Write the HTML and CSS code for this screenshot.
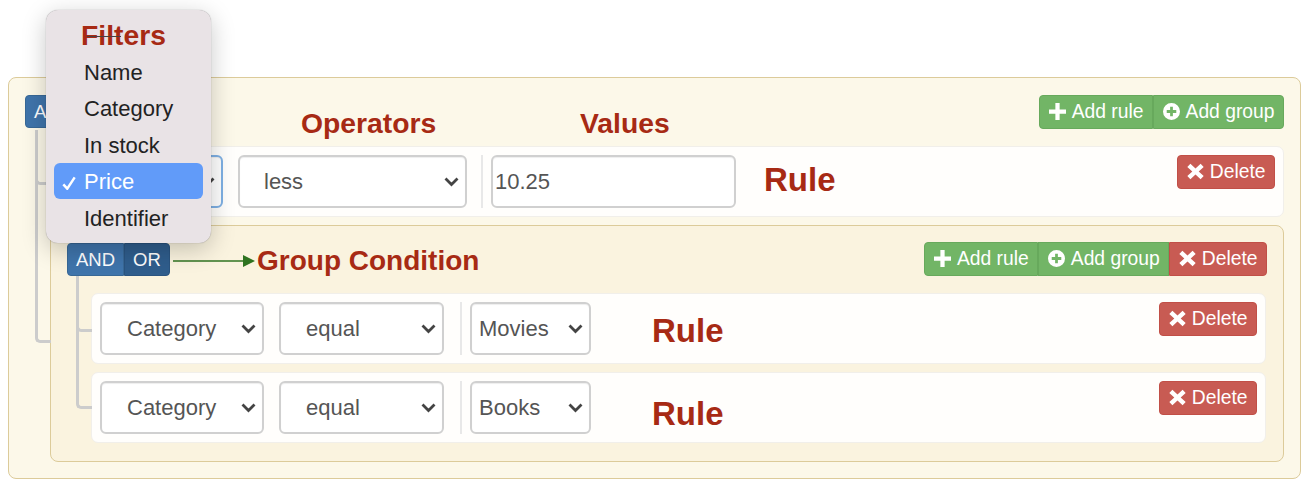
FILE: index.html
```html
<!DOCTYPE html>
<html lang="en">
<head>
  <meta charset="UTF-8">
  <title>Query Builder Filters</title>
  <link rel="stylesheet" href="styles.css">
</head>
<body>
  <div class="page">
    <div class="group group-root">
      <div class="group-header">
        <div class="btn-group btn-group-condition">
          <button class="btn btn-blue">AND</button>
          <button class="btn btn-blue-dark">OR</button>
        </div>
        <div class="btn-group">
          <button class="btn btn-green"><svg class="icon" viewBox="0 0 16 16"><path d="M6 0h4v6h6v4h-6v6H6v-6H0V6h6z"/></svg>Add rule</button>
          <button class="btn btn-green"><svg class="icon" viewBox="0 0 16 16"><path fill-rule="evenodd" d="M8 0a8 8 0 1 1 0 16A8 8 0 0 1 8 0zM6.7 3.5v3.2H3.5v2.6h3.2v3.2h2.6V9.3h3.2V6.7H9.3V3.5z"/></svg>Add group</button>
        </div>
      </div>
      <div class="rules-list">
        <div class="rule">
          <select class="field field-filter field-focus"><option>Price</option></select>
          <select class="field field-operator-wide"><option>less</option></select>
          <div class="separator"></div>
          <input class="field field-input" type="text" value="10.25">
          <button class="btn btn-red btn-delete"><svg class="icon" viewBox="0 0 16 16"><path d="M3.2.8 8 5.2 12.8.8l2.9 2.9L11 8l4.7 4.3-2.9 2.9L8 10.8l-4.8 4.4-2.9-2.9L5 8 .3 3.700z"/></svg>Delete</button>
        </div>

        <div class="group group-nested">
          <div class="group-header">
            <div class="btn-group btn-group-condition">
              <button class="btn btn-blue">AND</button>
              <button class="btn btn-blue-dark">OR</button>
            </div>
            <div class="btn-group">
              <button class="btn btn-green"><svg class="icon" viewBox="0 0 16 16"><path d="M6 0h4v6h6v4h-6v6H6v-6H0V6h6z"/></svg>Add rule</button>
              <button class="btn btn-green"><svg class="icon" viewBox="0 0 16 16"><path fill-rule="evenodd" d="M8 0a8 8 0 1 1 0 16A8 8 0 0 1 8 0zM6.7 3.5v3.2H3.5v2.6h3.2v3.2h2.6V9.3h3.2V6.7H9.3V3.5z"/></svg>Add group</button>
              <button class="btn btn-red"><svg class="icon" viewBox="0 0 16 16"><path d="M3.2.8 8 5.2 12.8.8l2.9 2.9L11 8l4.7 4.3-2.9 2.9L8 10.8l-4.8 4.4-2.9-2.9L5 8 .3 3.700z"/></svg>Delete</button>
            </div>
          </div>
          <div class="rules-list">
            <div class="rule">
              <select class="field field-filter"><option>Category</option></select>
              <select class="field field-operator"><option>equal</option></select>
              <div class="separator"></div>
              <select class="field field-value"><option>Movies</option></select>
              <button class="btn btn-red btn-delete"><svg class="icon" viewBox="0 0 16 16"><path d="M3.2.8 8 5.2 12.8.8l2.9 2.9L11 8l4.7 4.3-2.9 2.9L8 10.8l-4.8 4.4-2.9-2.9L5 8 .3 3.700z"/></svg>Delete</button>
            </div>
            <div class="rule">
              <select class="field field-filter"><option>Category</option></select>
              <select class="field field-operator"><option>equal</option></select>
              <div class="separator"></div>
              <select class="field field-value"><option>Books</option></select>
              <button class="btn btn-red btn-delete"><svg class="icon" viewBox="0 0 16 16"><path d="M3.2.8 8 5.2 12.8.8l2.9 2.9L11 8l4.7 4.3-2.9 2.9L8 10.8l-4.8 4.4-2.9-2.9L5 8 .3 3.700z"/></svg>Delete</button>
            </div>
          </div>
        </div>
      </div>
    </div>

    <!-- annotations drawn on top of the builder -->
    <span class="note note-operators">Operators</span>
    <span class="note note-values">Values</span>
    <span class="note note-group">Group Condition</span>
    <span class="note note-rule note-rule-1">Rule</span>
    <span class="note note-rule note-rule-2">Rule</span>
    <span class="note note-rule note-rule-3">Rule</span>
    <svg class="arrow" viewBox="0 0 82 12"><path d="M0 6h70" stroke="#2f7320" stroke-width="1.5" fill="none"/><path d="M70 0l12 6-12 6z" fill="#2f7320"/></svg>

    <!-- open filter dropdown -->
    <div class="menu">
      <div class="menu-item"></div>
      <div class="menu-item">Name</div>
      <div class="menu-item">Category</div>
      <div class="menu-item">In stock</div>
      <div class="menu-item menu-selected"><svg class="menu-check" viewBox="0 0 16 16"><path d="M1.500 9.500 6 14.500 14.500 1.500" fill="none" stroke="#fff" stroke-width="2.800"/></svg>Price</div>
      <div class="menu-item">Identifier</div>
    </div>
    <span class="note note-filters">Filters</span>
  </div>
</body>
</html>
```

FILE: styles.css
```css
/* General Styles */
body {
  margin: 0;
  background-color: #fff;
  font-family: "Liberation Sans", Arial, sans-serif;
  color: #555;
}

.page {
  position: relative;
  width: 1310px;
  height: 490px;
  padding: 77px 9px 0 8px;
  box-sizing: border-box;
  overflow: hidden;
}

/* Groups */
.group {
  border: 1px solid #dccb9a;
  border-radius: 8px;
  box-sizing: border-box;
}

.group-root {
  height: 402px;
  padding: 17px 16px;
  background-color: #fcf8e9;
}

.group-nested {
  position: relative;
  height: 237px;
  padding: 16px 17px 17px 15px;
  background-color: #faf3df;
}

.group-header {
  position: relative;
  display: flex;
  justify-content: space-between;
  height: 34px;
  margin-bottom: 17px;
}

.group-nested .group-header {
  margin-right: -1px;
}

.rules-list {
  position: relative;
  display: flex;
  flex-direction: column;
  gap: 8px;
  padding-left: 25px;
}

/* Tree connectors */
.rule::before,
.group-nested::before {
  content: "";
  position: absolute;
  left: -16px;
  width: 16px;
  border-left: 3px solid #ccc;
  border-bottom: 3px solid #ccc;
  border-bottom-left-radius: 5px;
  box-sizing: border-box;
}

.rule {
  position: relative;
  display: flex;
  align-items: flex-start;
  height: 71px;
  padding: 8px;
  background-color: #fffefc;
  border: 1px solid #f1efea;
  border-radius: 7px;
  box-sizing: border-box;
}

.rule::before {
  top: -18px;
  height: 56px;
}

.rule + .rule::before {
  top: -50px;
  height: 86px;
}

.group-root > .rules-list > .rule::before {
  top: -17px;
  height: 55px;
}

.group-nested::before {
  top: -96px;
  height: 213px;
}

/* Buttons */
.btn-group {
  display: flex;
  height: 34px;
}

.btn {
  display: flex;
  align-items: center;
  height: 34px;
  padding: 0 8.500px;
  border: 1px solid transparent;
  font-family: inherit;
  font-size: 19.300px;
  color: #fff;
  box-sizing: border-box;
}

.btn-group .btn:first-child {
  border-radius: 4px 0 0 4px;
}

.btn-group .btn:last-child {
  border-radius: 0 4px 4px 0;
}

.btn-group-condition .btn {
  height: 33px;
  padding: 0 8px;
  font-size: 18.500px;
}

.group-nested .btn-group-condition {
  margin: 1px 0 0 1px;
}

.btn-blue {
  background-color: #3f74ab;
  border-color: #386896;
}

.btn-blue-dark {
  background-color: #2f5d8c;
  border-color: #2a5480;
}

.btn-green {
  background-color: #72b566;
  border-color: #67a95c;
}

.btn-red {
  background-color: #c85b53;
  border-color: #c14f47;
}

.btn-delete {
  margin-left: auto;
  border-radius: 4px;
}

.icon {
  width: 17px;
  height: 17px;
  margin-right: 6px;
  margin-top: -2px;
  fill: #fff;
}

/* Form fields */
.field {
  height: 53px;
  border: 2px solid #d0d0d0;
  border-radius: 6px;
  background-color: #fff;
  font-family: inherit;
  font-size: 22px;
  color: #555;
  box-sizing: border-box;
  box-shadow: inset 0 1px 1px rgba(0, 0, 0, 0.07);
}

select.field {
  appearance: none;
  background-image: url("data:image/svg+xml,%3Csvg xmlns='http://www.w3.org/2000/svg' width='15' height='10'%3E%3Cpath d='M1.500 1.500 7.500 7.500l6-6' fill='none' stroke='%23444' stroke-width='2.800'/%3E%3C/svg%3E");
  background-repeat: no-repeat;
  background-position: right 6px center;
}

.field-filter {
  width: 164px;
  margin-right: 15px;
  padding-left: 25px;
}

.field-focus {
  border-color: #7eb0e4;
}

.field-operator {
  width: 165px;
  padding-left: 25px;
}

.field-operator-wide {
  width: 229px;
  padding-left: 24px;
}

.field-value {
  width: 121px;
  padding-left: 7px;
}

.field-input {
  width: 245px;
  padding: 0 2px;
}

.separator {
  align-self: stretch;
  width: 2px;
  margin: 0 8px 0 14px;
  background-color: #e8e8e8;
}

.group-nested .separator {
  margin: 0 8px 0 16px;
}

/* Annotations */
.note {
  position: absolute;
  font-weight: bold;
  color: #a72a14;
  font-size: 28.300px;
  line-height: 32px;
  white-space: nowrap;
}

.note-operators { left: 301px; top: 107px; }
.note-values { left: 580px; top: 107px; }
.note-group { left: 257px; top: 245px; font-size: 28px; }
.note-filters { left: 81px; top: 19px; }

/* dashed first option showing through the Filters label */
.note-filters::after {
  content: "";
  position: absolute;
  left: 6px;
  top: 17px;
  width: 34px;
  border-top: 1px solid #4a4040;
}

.note-rule {
  font-size: 33px;
  line-height: 36px;
}

.note-rule-1 { left: 764px; top: 162px; }
.note-rule-2 { left: 652px; top: 313px; }
.note-rule-3 { left: 652px; top: 396px; }

.arrow {
  position: absolute;
  left: 173px;
  top: 255px;
  width: 82px;
  height: 12px;
}

/* Open dropdown */
.menu {
  position: absolute;
  left: 46px;
  top: 10px;
  width: 165px;
  height: 233px;
  padding: 7px 8px;
  background-color: #e9e3e6;
  border-radius: 12px;
  box-shadow: 0 0 1px rgba(0, 0, 0, 0.4), 0 6px 24px rgba(0, 0, 0, 0.22);
  box-sizing: border-box;
}

.menu-item {
  position: relative;
  display: flex;
  align-items: center;
  height: 36.400px;
  padding: 3px 0 0 30px;
  font-size: 22px;
  color: #222;
  box-sizing: border-box;
}

.menu-selected {
  background-color: #619bf9;
  border-radius: 6px;
  color: #fff;
}

.menu-check {
  position: absolute;
  left: 8px;
  top: 13px;
  width: 14px;
  height: 14px;
}
```
